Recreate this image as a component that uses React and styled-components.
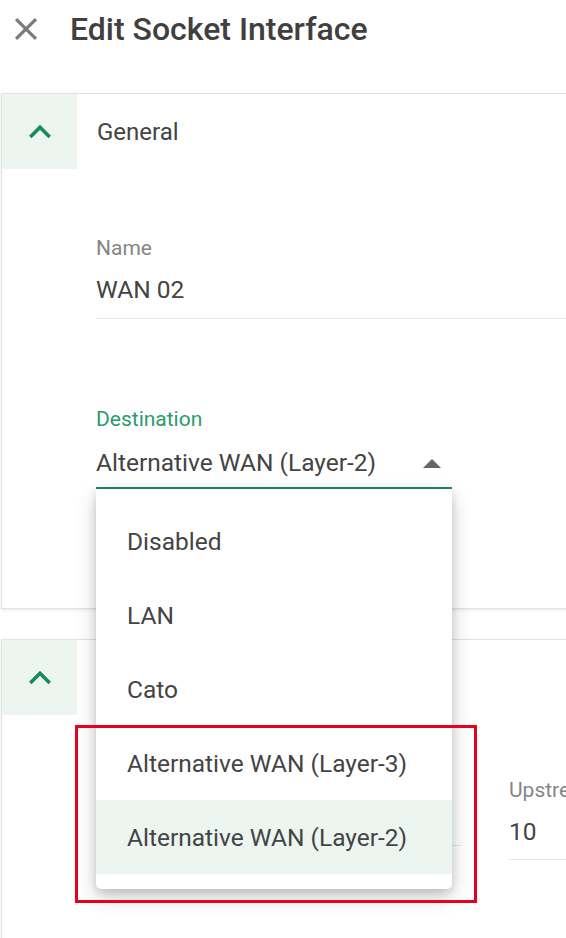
import React from "react";
import styled, { createGlobalStyle } from "styled-components";

const Global = createGlobalStyle`
  html, body { margin: 0; padding: 0; background: #fff; overflow: hidden; }
  body { font-family: Roboto, "Liberation Sans", sans-serif; color: #444; }
  * { box-sizing: border-box; }
`;

const Page = styled.div`
  width: 566px;
  height: 938px;
  overflow: hidden;
  position: relative;
`;

const Header = styled.header`
  display: flex;
  align-items: center;
  height: 57px;
  padding-left: 7px;
`;

const CloseButton = styled.button`
  width: 38px;
  height: 38px;
  padding: 0;
  border: 0;
  background: none;
  display: flex;
  align-items: center;
  justify-content: center;
  color: #7a7a7a;
`;

const Title = styled.h1`
  margin: 0 0 0 25px;
  font-size: 32px;
  font-weight: 500;
  color: #404040;
  letter-spacing: 0;
`;

const Card = styled.section`
  margin: ${(p) => p.$top}px -40px 0 1px;
  border: 1px solid #e3e3e3;
  box-shadow: 0 1px 3px rgba(0, 0, 0, 0.1);
  background: #fff;
  padding-bottom: ${(p) => p.$bottom}px;
`;

const CardHeader = styled.div`
  display: flex;
  align-items: center;
  height: 75px;
`;

const ToggleTile = styled.div`
  width: 75px;
  height: 75px;
  background: #edf5f1;
  display: flex;
  align-items: center;
  justify-content: center;
  color: #1b8a5a;
`;

const CardTitle = styled.div`
  margin-left: 20px;
  font-size: 24px;
  color: #444;
`;

const CardBody = styled.div`
  padding: ${(p) => p.$top}px 0 0 94px;
  display: flex;
  flex-direction: column;
  gap: ${(p) => p.$gap || 0}px;
`;

const FieldRow = styled.div`
  display: flex;
  gap: 47px;
`;

const Field = styled.div`
  position: relative;
  display: flex;
  flex-direction: column;
  width: ${(p) => (p.$width ? `${p.$width}px` : "auto")};
  flex: ${(p) => (p.$width ? "none" : "1")};
`;

const Label = styled.div`
  font-size: 21px;
  line-height: 24px;
  min-height: 24px;
  white-space: nowrap;
  color: ${(p) => (p.$active ? "#2a9b6b" : "#858585")};
`;

const Value = styled.div`
  display: flex;
  align-items: center;
  justify-content: space-between;
  min-height: 28px;
  margin-top: ${(p) => p.$gap}px;
  padding-bottom: ${(p) => p.$pad}px;
  border-bottom: ${(p) => (p.$active ? "2px solid #1e8a5c" : "1px solid #e8e8e8")};
  font-size: 24.5px;
  line-height: 28px;
  color: #444;
`;

const Arrow = styled.span`
  display: flex;
  margin-right: 11px;
  color: #666;
`;

const Menu = styled.ul`
  position: absolute;
  top: 100%;
  left: 0;
  width: 100%;
  margin: 0;
  padding: 15px 0;
  list-style: none;
  background: #fff;
  border-radius: 0 0 5px 5px;
  box-shadow: 0 8px 20px rgba(0, 0, 0, 0.2), 0 3px 8px rgba(0, 0, 0, 0.12);
  z-index: 10;
`;

const MenuItem = styled.li`
  height: 74px;
  display: flex;
  align-items: center;
  padding-left: 31px;
  font-size: 24.5px;
  color: #444;
  background: ${(p) => (p.$selected ? "#edf5f0" : "transparent")};
`;

const Highlight = styled.div`
  position: absolute;
  left: -21px;
  top: 236px;
  width: 402px;
  height: 178px;
  border: 3px solid #e8001f;
  pointer-events: none;
`;

const CloseIcon = () => (
  <svg width="38" height="38" viewBox="0 0 24 24" fill="currentColor">
    <path d="M19 6.41L17.59 5 12 10.59 6.41 5 5 6.41 10.59 12 5 17.59 6.41 19 12 13.41 17.59 19 19 17.59 13.41 12z" />
  </svg>
);

const ChevronUp = () => (
  <svg width="44" height="44" viewBox="0 0 24 24" fill="currentColor">
    <path d="M12 8l-6 6 1.41 1.41L12 10.83l4.59 4.58L18 14z" />
  </svg>
);

const DropUp = () => (
  <svg width="18" height="9" viewBox="0 0 18 9" fill="currentColor">
    <path d="M0 9L9 0l9 9z" />
  </svg>
);

const options = [
  "Disabled",
  "LAN",
  "Cato",
  "Alternative WAN (Layer-3)",
  "Alternative WAN (Layer-2)",
];

export default function App() {
  const selected = "Alternative WAN (Layer-2)";
  return (
    <Page>
      <Global />
      <Header>
        <CloseButton aria-label="Close">
          <CloseIcon />
        </CloseButton>
        <Title>Edit Socket Interface</Title>
      </Header>

      <Card $top={36} $bottom={119}>
        <CardHeader>
          <ToggleTile>
            <ChevronUp />
          </ToggleTile>
          <CardTitle>General</CardTitle>
        </CardHeader>
        <CardBody $top={67} $gap={88}>
          <Field>
            <Label>Name</Label>
            <Value $gap={16} $pad={14}>WAN 02</Value>
          </Field>
          <Field $width={356}>
            <Label $active>Destination</Label>
            <Value $gap={18} $pad={10} $active>
              {selected}
              <Arrow>
                <DropUp />
              </Arrow>
            </Value>
            <Menu>
              {options.map((o) => (
                <MenuItem key={o} $selected={o === selected}>
                  {o}
                </MenuItem>
              ))}
              <Highlight />
            </Menu>
          </Field>
        </CardBody>
      </Card>

      <Card $top={30} $bottom={120}>
        <CardHeader>
          <ToggleTile>
            <ChevronUp />
          </ToggleTile>
        </CardHeader>
        <CardBody $top={63}>
          <FieldRow>
            <Field $width={366}>
              <Label />
              <Value $gap={16} $pad={13} />
            </Field>
            <Field>
              <Label>Upstream</Label>
              <Value $gap={16} $pad={13}>10</Value>
            </Field>
          </FieldRow>
        </CardBody>
      </Card>
    </Page>
  );
}
